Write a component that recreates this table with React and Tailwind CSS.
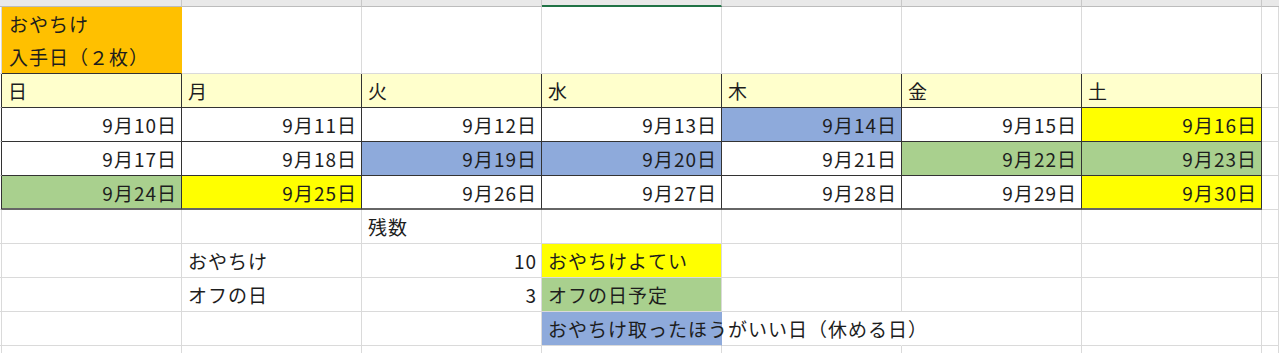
import React from 'react';

const GRID = 'border-[#dadada]';
const DARK = 'border-[#333333]';

const fills = {
  w: '',
  b: 'bg-[#8eaadb]',
  g: 'bg-[#a9d08e]',
  y: 'bg-[#ffff00]',
  h: 'bg-[#ffffcc]',
  o: 'bg-[#ffc000]',
};

// one sheet cell; right/bottom border colours are given per cell
const Cell = ({ fill = 'w', right = GRID, bottom = GRID, align = 'left', last, children, className = '' }) => (
  <div
    className={`${last ? 'w-[17px]' : 'w-[180px]'} shrink-0 h-full flex items-center border-r border-b whitespace-nowrap ${fills[fill]} ${right} ${bottom} ${
      align === 'right' ? 'justify-end pr-[4px]' : 'justify-start pl-[6px]'
    } ${className}`}
  >
    {children}
  </div>
);

const Gutter = ({ dark }) => (
  <div className={`w-[2px] shrink-0 h-full border-r border-b ${dark ? DARK : GRID} border-b-[#dadada]`} />
);

const days = ['日', '月', '火', '水', '木', '金', '土'];

const weeks = [
  [[10, 'w'], [11, 'w'], [12, 'w'], [13, 'w'], [14, 'b'], [15, 'w'], [16, 'y']],
  [[17, 'w'], [18, 'w'], [19, 'b'], [20, 'b'], [21, 'w'], [22, 'g'], [23, 'g']],
  [[24, 'g'], [25, 'y'], [26, 'w'], [27, 'w'], [28, 'w'], [29, 'w'], [30, 'y']],
];

const App = () => {
  return (
    <div className="w-[1280px] h-[353px] overflow-hidden bg-white text-[19px] tracking-[1px] leading-none text-[#1d1d1d] font-['Noto_Sans_CJK_JP','Noto_Sans',sans-serif]">
      {/* column header strip */}
      <div className="flex h-[7px]">
        <div className="w-[2px] shrink-0 bg-[#e9e9e9] border-b border-[#bcbcbc]" />
        {[0, 1, 2, 3, 4, 5, 6].map((i) => (
          <div
            key={i}
            className={`w-[180px] shrink-0 bg-[#e9e9e9] border-r border-[#c8c8c8] ${
              i === 3 ? 'border-b-2 border-b-[#217346]' : 'border-b border-b-[#bcbcbc]'
            }`}
          />
        ))}
        <div className="w-[17px] shrink-0 bg-[#e9e9e9] border-b border-[#bcbcbc]" />
      </div>

      {/* title row */}
      <div className="flex h-[67px]">
        <Gutter />
        <div className={`w-[180px] shrink-0 h-full flex flex-col justify-center gap-[14px] pl-[7px] ${fills.o} border-r border-b border-r-[#ffc000] ${DARK}`}>
          <span>おやちけ</span>
          <span>入手日（２枚）</span>
        </div>
        {[1, 2, 3, 4, 5, 6].map((i) => (
          <Cell key={i} bottom={DARK} />
        ))}
        <Cell last />
      </div>

      {/* weekday header */}
      <div className="flex h-[34px]">
        <Gutter dark />
        {days.map((d) => (
          <Cell key={d} fill="h" right={DARK} bottom={DARK}>
            {d}
          </Cell>
        ))}
        <Cell last />
      </div>

      {/* dates */}
      {weeks.map((week, wi) => (
        <div key={wi} className="flex h-[34px]">
          <Gutter dark />
          {week.map(([day, fill]) => (
            <Cell
              key={day}
              fill={fill}
              align="right"
              right={DARK}
              bottom={wi === 2 ? 'border-b-2 border-b-[#666666]' : DARK}
            >
              9月{day}日
            </Cell>
          ))}
          <Cell last />
        </div>
      ))}

      {/* remaining count */}
      <div className="flex h-[34px]">
        <Gutter />
        <Cell />
        <Cell />
        <Cell>残数</Cell>
        <Cell />
        <Cell />
        <Cell />
        <Cell />
        <Cell last />
      </div>

      <div className="flex h-[34px]">
        <Gutter />
        <Cell />
        <Cell>おやちけ</Cell>
        <Cell align="right">10</Cell>
        <Cell fill="y">おやちけよてい</Cell>
        <Cell />
        <Cell />
        <Cell />
        <Cell last />
      </div>

      <div className="flex h-[34px]">
        <Gutter />
        <Cell />
        <Cell>オフの日</Cell>
        <Cell align="right">3</Cell>
        <Cell fill="g">オフの日予定</Cell>
        <Cell />
        <Cell />
        <Cell />
        <Cell last />
      </div>

      <div className="flex h-[34px]">
        <Gutter />
        <Cell />
        <Cell />
        <Cell />
        <Cell fill="b" right="border-r-[#8eaadb]" className="relative z-10">
          おやちけ取ったほうがいい日（休める日）
        </Cell>
        <Cell right="border-r-transparent" />
        <Cell />
        <Cell />
        <Cell last />
      </div>

      <div className="flex h-[34px]">
        <Gutter />
        <Cell />
        <Cell />
        <Cell />
        <Cell />
        <Cell />
        <Cell />
        <Cell />
        <Cell last />
      </div>
    </div>
  );
};

export default App;
